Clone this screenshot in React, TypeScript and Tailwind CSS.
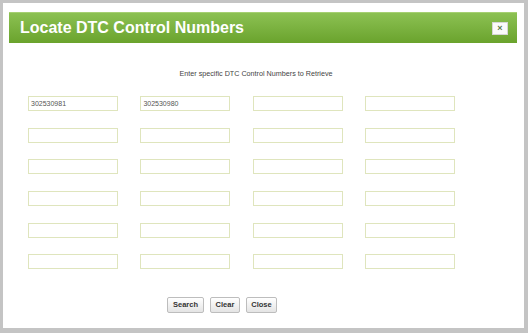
export default function App() {
  const values = ['302530981', '302530980'];
  const cells = Array.from({ length: 24 }, (_, i) => values[i] ?? '');
  const buttons = [
    { label: 'Search', w: 'w-[37px]' },
    { label: 'Clear', w: 'w-[30px]' },
    { label: 'Close', w: 'w-[31px]' },
  ];

  return (
    <div className="w-[528px] h-[333px] bg-[#c4c4c4] pt-[3px] pl-[3px] overflow-hidden" style={{ fontFamily: '"Liberation Sans", Arial, sans-serif' }}>
      <div className="w-[521px] h-[325px] bg-white flex flex-col">
        {/* Header bar */}
        <div className="mt-[9px] ml-[6px] w-[508px] h-[31px] flex items-center justify-between pl-[11px] pr-[9px] bg-gradient-to-b from-[#8cc152] to-[#6aa32c] border-t border-[#a6d072]">
          <h1 className="text-white font-bold text-[16px] leading-none">Locate DTC Control Numbers</h1>
          <button className="w-[16px] h-[13px] bg-[#fafafa] border border-[#d6d6d6] flex items-center justify-center text-[#5a7a4a] text-[9px] font-bold leading-none">
            ×
          </button>
        </div>

        <p className="mt-[27px] text-center text-[7.2px] leading-none text-[#444] pr-[15px]">
          Enter specific DTC Control Numbers to Retrieve
        </p>

        <div className="mt-[19px] ml-[25px] grid grid-cols-[90px_90px_90px_90px] gap-x-[22.4px] gap-y-[16.6px]">
          {cells.map((v, i) => (
            <div key={i} className="h-[15px] border border-[#dfe5bd] flex items-center pl-[2px] text-[7px] text-[#555] leading-none">
              {v}
            </div>
          ))}
        </div>

        <div className="mt-[28px] ml-[164px] flex gap-[6px]">
          {buttons.map((b) => (
            <button
              key={b.label}
              className={`${b.w} h-[16px] flex items-center justify-center bg-gradient-to-b from-white to-[#e4e4e4] border border-[#bdbdbd] rounded-[2px] text-[7.5px] font-bold text-[#333] leading-none`}
            >
              {b.label}
            </button>
          ))}
        </div>
      </div>
    </div>
  );
}
